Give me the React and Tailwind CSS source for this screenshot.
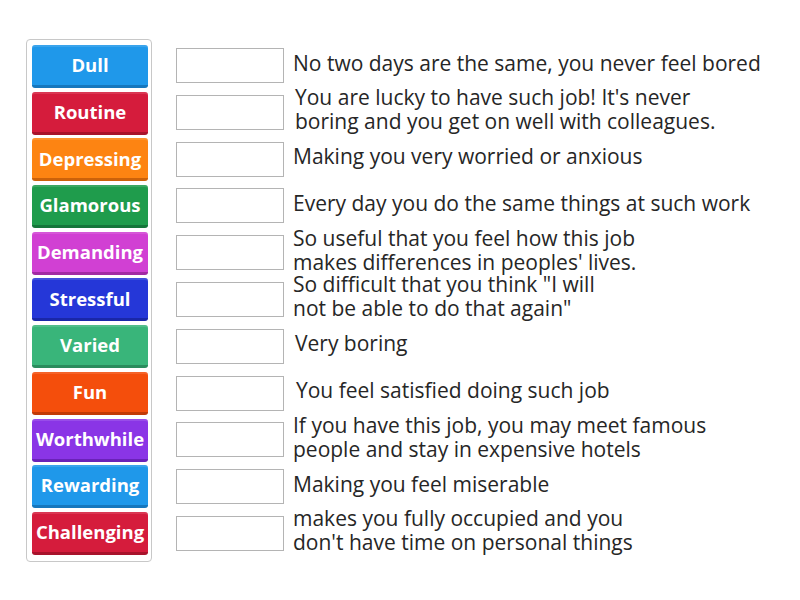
import React from "react";

const items = [
  { label: "Dull", cls: "bg-[#1f98ea] border-[#1677bd]" },
  { label: "Routine", cls: "bg-[#d51c3c] border-[#a8132c]" },
  { label: "Depressing", cls: "bg-[#fd8412] border-[#cc620a]" },
  { label: "Glamorous", cls: "bg-[#1f9c4c] border-[#15763a]" },
  { label: "Demanding", cls: "bg-[#d140d3] border-[#a22aa4]" },
  { label: "Stressful", cls: "bg-[#2537d8] border-[#1a27a8]" },
  { label: "Varied", cls: "bg-[#39b57a] border-[#2a8c5d]" },
  { label: "Fun", cls: "bg-[#f44e0c] border-[#c23a06]" },
  { label: "Worthwhile", cls: "bg-[#8a35e6] border-[#6a22b8]" },
  { label: "Rewarding", cls: "bg-[#1f98ea] border-[#1677bd]" },
  { label: "Challenging", cls: "bg-[#d51c3c] border-[#a8132c]" },
];

const texts = [
  ["No two days are the same, you never feel bored"],
  ["You are lucky to have such job! It's never", "boring and you get on well with colleagues."],
  ["Making you very worried or anxious"],
  ["Every day you do the same things at such work"],
  ["So useful that you feel how this job", "makes differences in peoples' lives."],
  ["So difficult that you think \"I will", "not be able to do that again\""],
  ["Very boring"],
  ["You feel satisfied doing such job"],
  ["If you have this job, you may meet famous", "people and stay in expensive hotels"],
  ["Making you feel miserable"],
  ["makes you fully occupied and you", "don't have time on personal things"],
];

const offsets = ["ml-0", "ml-[2px]", "ml-0", "ml-0", "ml-0", "ml-0", "ml-[2px]", "ml-[3px]", "ml-0", "ml-0", "ml-0"];

export default function App() {
  return (
    <div
      className="w-[800px] h-[600px] bg-white relative"
      style={{ fontFamily: '"Open Sans", "Noto Sans", sans-serif' }}
    >
      <div className="flex pt-[39px] pl-[26px]">
        <div className="w-[126px] border border-[#c8c8c8] rounded-[4px] pt-[5px] pb-[6px] pl-[5px] pr-[3px] flex flex-col gap-[3.7px] bg-white">
          {items.map((it) => (
            <div
              key={it.label}
              className={`h-[43px] rounded-[3px] border-b-[3px] flex items-center justify-center text-white font-bold text-[18.5px] ${it.cls}`}
              style={{ boxShadow: "inset 0 2px 0 rgba(255,255,255,0.12)" }}
            >
              {it.label}
            </div>
          ))}
        </div>
        <div className="flex flex-col pt-[9px] pl-[24px] gap-[11.8px]">
          {texts.map((lines, i) => (
            <div key={i} className="flex items-center h-[35px]">
              <div className="w-[108px] h-[35px] border border-[#b4b4b4] bg-white shrink-0" />
              <div
                className={`pl-[9px] text-[21px] leading-[24px] text-[#262626] whitespace-nowrap -mt-[6px] ${offsets[i]}`}
              >
                {lines.map((l, j) => (
                  <div key={j}>{l}</div>
                ))}
              </div>
            </div>
          ))}
        </div>
      </div>
    </div>
  );
}
